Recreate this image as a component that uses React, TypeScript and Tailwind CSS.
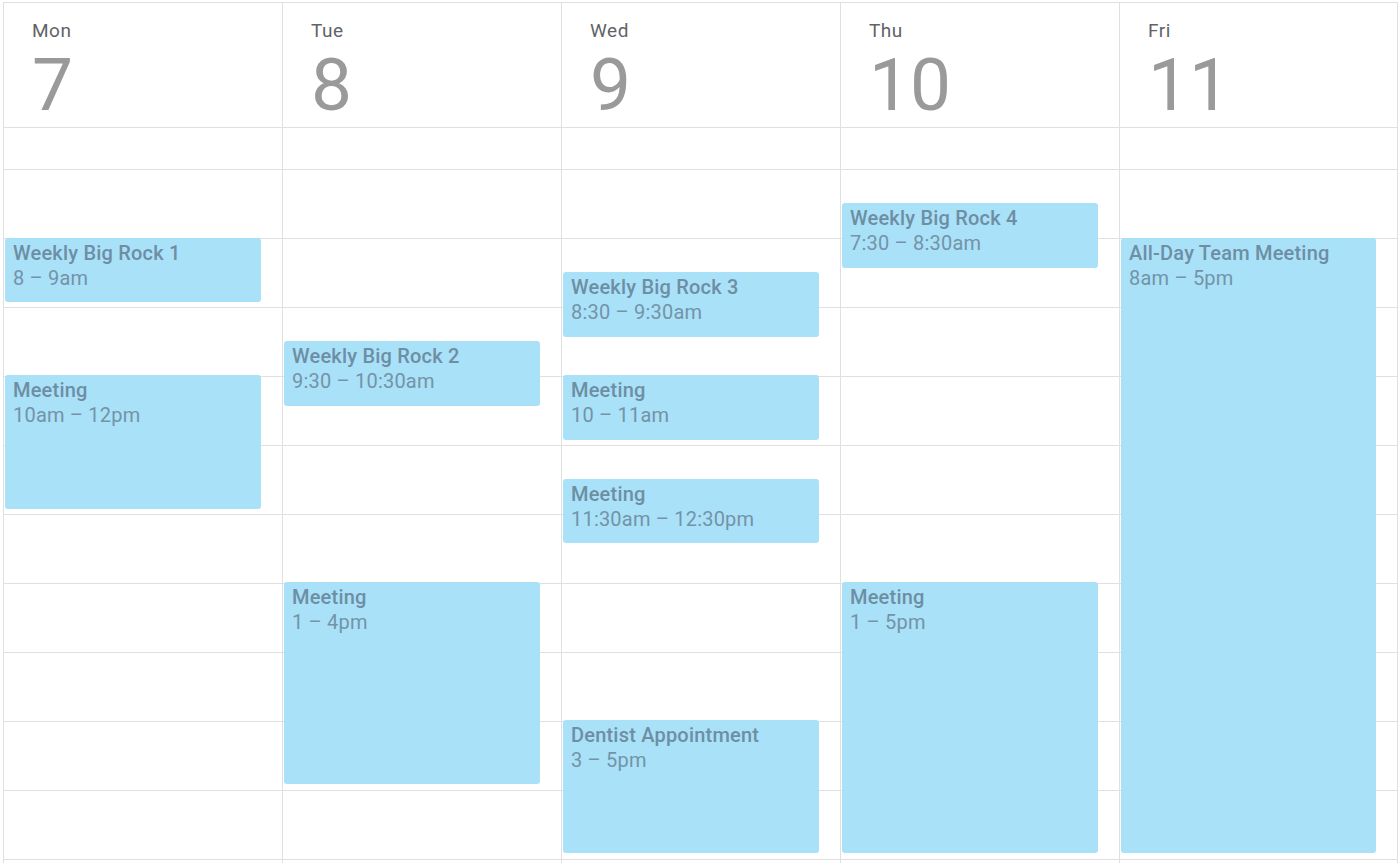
import React from "react";

type Ev = { title: string; time: string; start: number; end: number };
type Day = { name: string; num: string; events: Ev[] };

const days: Day[] = [
  {
    name: "Mon",
    num: "7",
    events: [
      { title: "Weekly Big Rock 1", time: "8 – 9am", start: 8, end: 9 },
      { title: "Meeting", time: "10am – 12pm", start: 10, end: 12 },
    ],
  },
  {
    name: "Tue",
    num: "8",
    events: [
      { title: "Weekly Big Rock 2", time: "9:30 – 10:30am", start: 9.5, end: 10.5 },
      { title: "Meeting", time: "1 – 4pm", start: 13, end: 16 },
    ],
  },
  {
    name: "Wed",
    num: "9",
    events: [
      { title: "Weekly Big Rock 3", time: "8:30 – 9:30am", start: 8.5, end: 9.5 },
      { title: "Meeting", time: "10 – 11am", start: 10, end: 11 },
      { title: "Meeting", time: "11:30am – 12:30pm", start: 11.5, end: 12.5 },
      { title: "Dentist Appointment", time: "3 – 5pm", start: 15, end: 17 },
    ],
  },
  {
    name: "Thu",
    num: "10",
    events: [
      { title: "Weekly Big Rock 4", time: "7:30 – 8:30am", start: 7.5, end: 8.5 },
      { title: "Meeting", time: "1 – 5pm", start: 13, end: 17 },
    ],
  },
  {
    name: "Fri",
    num: "11",
    events: [{ title: "All-Day Team Meeting", time: "8am – 5pm", start: 8, end: 17 }],
  },
];

const HOUR = 68.86;
const pos = (t: number) => Math.floor(68 + (t - 8) * HOUR);
const hours = Array.from({ length: 11 }, (_, i) => i);

function DayColumn({ day, last }: { day: Day; last: boolean }) {
  return (
    <div className={`flex flex-col border-l border-[#e0e0e0] ${last ? "border-r" : ""}`}>
      <div className="h-[126px] border-t border-b border-[#e0e0e0] pl-[28px] pt-[16px]">
        <div className="text-[19px] leading-[24px] tracking-[0.5px] text-[#5f6368]">{day.name}</div>
        <div className="mt-[5px] text-[73px] leading-[74px] text-[#9a9a9a]">{day.num}</div>
      </div>
      <div className="h-[42px] border-b border-[#e0e0e0]" />
      <div className="relative">
        {hours.map((h) => (
          <div key={h} className="h-[69px] border-b border-[#e0e0e0]" />
        ))}
        {day.events.map((ev, i) => {
          const top = pos(ev.start);
          const bottom = pos(ev.end) - 4;
          return (
            <div
              key={i}
              className="absolute left-[1px] right-[21px] overflow-hidden rounded-[3px] bg-[#a9e1f9] pl-[8px] pt-[3px] text-[#6e8ea3]"
              style={{ top, height: bottom - top }}
            >
              <div className="whitespace-nowrap text-[20px] leading-[25px] tracking-[0.2px] font-medium">{ev.title}</div>
              <div className="whitespace-nowrap text-[20px] leading-[25px] tracking-[0.2px] text-[#7493a7]">{ev.time}</div>
            </div>
          );
        })}
      </div>
    </div>
  );
}

export default function App() {
  return (
    <div
      className="h-[863px] w-[1400px] overflow-hidden bg-white pl-[3px] pt-[2px]"
      style={{ fontFamily: "Roboto, 'Noto Sans', sans-serif" }}
    >
      <div className="grid w-[1395px] grid-cols-5">
        {days.map((d, i) => (
          <DayColumn key={d.name} day={d} last={i === days.length - 1} />
        ))}
      </div>
    </div>
  );
}
